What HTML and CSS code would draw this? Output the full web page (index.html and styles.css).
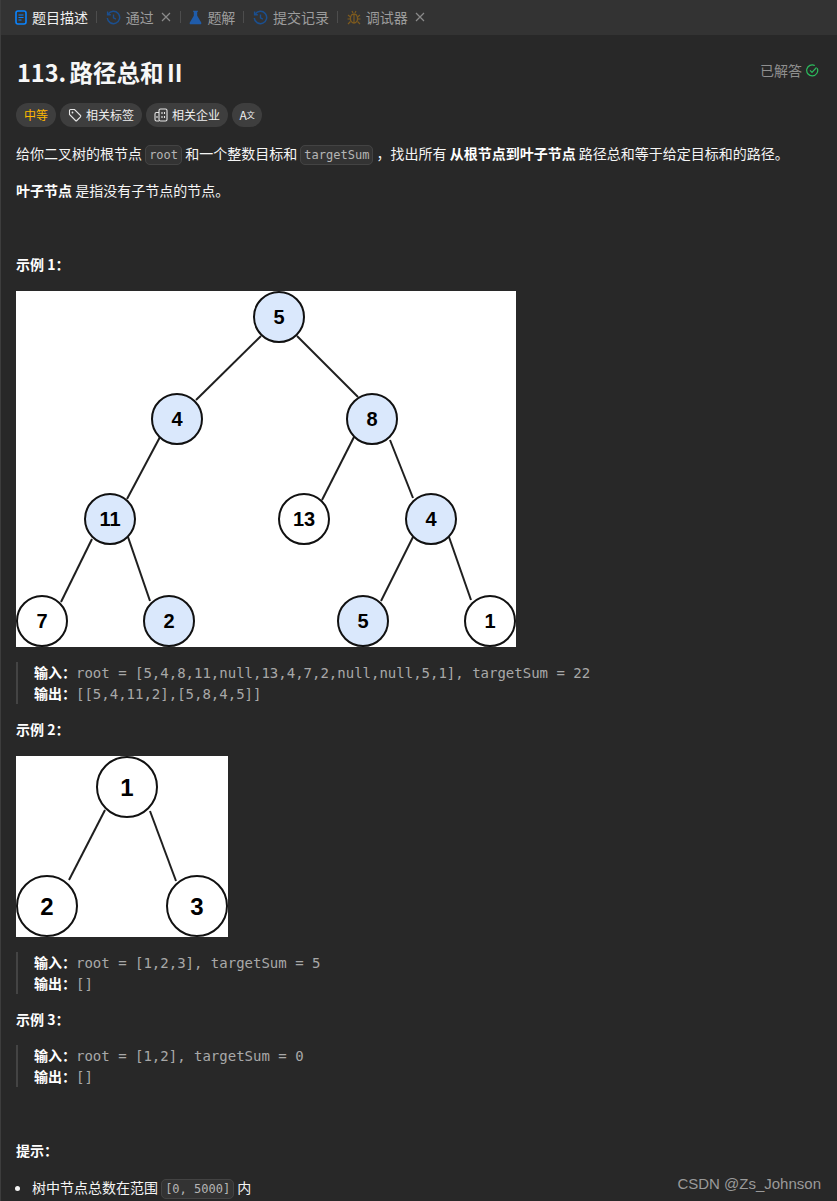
FILE: index.html
```html
<!DOCTYPE html>
<html lang="zh-CN">
<head>
  <meta charset="UTF-8">
  <title>113. 路径总和 II</title>
  <link rel="stylesheet" href="styles.css">
</head>
<body>
<div class="tabs">
  <div class="tab active">
    <svg class="tab-icon" width="12" height="15" viewBox="0 0 12 15"><rect x="1" y="1" width="10" height="13" rx="2" fill="none" stroke="#0a84ff" stroke-width="1.6"/><path d="M3.5 5h5M3.5 7.5h5M3.5 10h3" stroke="#0a84ff" stroke-width="1.2"/></svg>
    <span>题目描述</span>
  </div>
  <i class="sep"></i>
  <div class="tab">
    <svg class="tab-icon" width="15" height="15" viewBox="0 0 15 15"><path d="M2.2 4.2A6.2 6.2 0 1 1 1.3 8" fill="none" stroke="#1b4f8f" stroke-width="1.5"/><path d="M1.6 1.5v3.2h3.2" fill="none" stroke="#1b4f8f" stroke-width="1.4"/><path d="M7.5 4.5v3.3l2.4 1.4" fill="none" stroke="#1b4f8f" stroke-width="1.4"/></svg>
    <span>通过</span>
    <svg class="close" width="10" height="10" viewBox="0 0 10 10"><path d="M1 1l8 8M9 1l-8 8" stroke="#8a8a8a" stroke-width="1.2"/></svg>
  </div>
  <i class="sep"></i>
  <div class="tab">
    <svg class="tab-icon" width="13" height="15" viewBox="0 0 13 15"><path d="M4 .8h5v1H8.2v4l4 6.6c.5.9 0 1.8-1 1.8H1.800c-1 0-1.500-.9-1-1.800l4-6.600v-4H4z" fill="#1f5cab"/></svg>
    <span>题解</span>
  </div>
  <i class="sep"></i>
  <div class="tab">
    <svg class="tab-icon" width="15" height="15" viewBox="0 0 15 15"><path d="M2.200 4.200A6.200 6.200 0 1 1 1.300 8" fill="none" stroke="#1b4f8f" stroke-width="1.500"/><path d="M1.600 1.500v3.200h3.200" fill="none" stroke="#1b4f8f" stroke-width="1.400"/><path d="M7.500 4.500v3.300l2.400 1.400" fill="none" stroke="#1b4f8f" stroke-width="1.400"/></svg>
    <span>提交记录</span>
  </div>
  <i class="sep"></i>
  <div class="tab">
    <svg class="tab-icon" width="14" height="15" viewBox="0 0 14 15"><ellipse cx="7" cy="8.500" rx="3.600" ry="4.500" fill="none" stroke="#7d5a1e" stroke-width="1.400"/><path d="M4.500 4.500h5M7 5v8M1 5l2.500 2M13 5l-2.500 2M.5 9h3M13.500 9h-3M1 14l2.500-2.500M13 14l-2.500-2.500M5 1l1 2M9 1L8 3" stroke="#7d5a1e" stroke-width="1.200" fill="none"/></svg>
    <span>调试器</span>
    <svg class="close" width="10" height="10" viewBox="0 0 10 10"><path d="M1 1l8 8M9 1l-8 8" stroke="#8a8a8a" stroke-width="1.200"/></svg>
  </div>
</div>

<main class="content">
  <div class="title-row">
    <h1>113. 路径总和 II</h1>
    <div class="solved">
      <span>已解答</span>
      <svg width="13" height="13" viewBox="0 0 13 13"><path d="M11.300 4.300A5.500 5.500 0 1 1 8.800 1.500" fill="none" stroke="#2cbb5d" stroke-width="1.200"/><path d="M4 6.300l2 2 4.500-4.800" fill="none" stroke="#2cbb5d" stroke-width="1.200"/></svg>
    </div>
  </div>

  <div class="chips">
    <span class="chip level">中等</span>
    <span class="chip">
      <svg width="14" height="14" viewBox="0 0 14 14"><path d="M1.500 2.500a1 1 0 0 1 1-1h4l6 6a1 1 0 0 1 0 1.400l-3.600 3.600a1 1 0 0 1-1.400 0l-6-6z" fill="none" stroke="#e6e6e6" stroke-width="1.100"/><circle cx="4.500" cy="4.500" r=".9" fill="#e6e6e6"/></svg>
      相关标签
    </span>
    <span class="chip">
      <svg width="14" height="14" viewBox="0 0 14 14"><rect x="5" y="1" width="8" height="12" rx="1.500" fill="none" stroke="#e6e6e6" stroke-width="1.100"/><path d="M5 4.500H2.500A1.500 1.500 0 0 0 1 6v5.500A1.500 1.500 0 0 0 2.500 13H5M8 4v2M10.500 4v2M8 8v2M10.500 8v2M3 8v2" fill="none" stroke="#e6e6e6" stroke-width="1.100"/></svg>
      相关企业
    </span>
    <span class="chip lang">A<small>文</small></span>
  </div>

  <p>给你二叉树的根节点 <code>root</code> 和一个整数目标和 <code>targetSum</code> ，找出所有 <strong>从根节点到叶子节点</strong> 路径总和等于给定目标和的路径。</p>
  <p><strong>叶子节点</strong> 是指没有子节点的节点。</p>

  <p class="heading first"><strong>示例 1：</strong></p>
  <svg class="tree" width="500" height="356" viewBox="0 0 500 356">
    <g class="edges">
      <line x1="245" y1="45" x2="180" y2="109"/>
      <line x1="281" y1="45" x2="342" y2="106"/>
      <line x1="144" y1="146" x2="111" y2="208"/>
      <line x1="338" y1="146" x2="306" y2="209"/>
      <line x1="374" y1="149" x2="397" y2="207"/>
      <line x1="76" y1="248" x2="45" y2="311"/>
      <line x1="112" y1="246" x2="134" y2="310"/>
      <line x1="397" y1="246" x2="365" y2="310"/>
      <line x1="433" y1="246" x2="455" y2="309"/>
    </g>
    <g class="nodes">
      <circle class="hit" cx="263" cy="26" r="25"/><text x="263" y="33">5</text>
      <circle class="hit" cx="161" cy="128" r="25"/><text x="161" y="135">4</text>
      <circle class="hit" cx="356" cy="128" r="25"/><text x="356" y="135">8</text>
      <circle class="hit" cx="94" cy="228" r="25"/><text x="94" y="235">11</text>
      <circle cx="288" cy="228" r="25"/><text x="288" y="235">13</text>
      <circle class="hit" cx="415" cy="228" r="25"/><text x="415" y="235">4</text>
      <circle cx="26" cy="330" r="25"/><text x="26" y="337">7</text>
      <circle class="hit" cx="153" cy="330" r="25"/><text x="153" y="337">2</text>
      <circle class="hit" cx="347" cy="330" r="25"/><text x="347" y="337">5</text>
      <circle cx="474" cy="330" r="25"/><text x="474" y="337">1</text>
    </g>
  </svg>
  <pre class="sample"><strong>输入：</strong>root = [5,4,8,11,null,13,4,7,2,null,null,5,1], targetSum = 22
<strong>输出：</strong>[[5,4,11,2],[5,8,4,5]]</pre>

  <p class="heading"><strong>示例 2：</strong></p>
  <svg class="tree" width="212" height="181" viewBox="0 0 212 181">
    <g class="edges">
      <line x1="89" y1="54" x2="53" y2="124"/>
      <line x1="134" y1="55" x2="160" y2="125"/>
    </g>
    <g class="nodes big">
      <circle cx="111" cy="31" r="30"/><text x="111" y="40">1</text>
      <circle cx="31" cy="150" r="30"/><text x="31" y="159">2</text>
      <circle cx="181" cy="150" r="30"/><text x="181" y="159">3</text>
    </g>
  </svg>
  <pre class="sample"><strong>输入：</strong>root = [1,2,3], targetSum = 5
<strong>输出：</strong>[]</pre>

  <p class="heading"><strong>示例 3：</strong></p>
  <pre class="sample"><strong>输入：</strong>root = [1,2], targetSum = 0
<strong>输出：</strong>[]</pre>

  <p class="heading first"><strong>提示：</strong></p>
  <ul>
    <li>树中节点总数在范围 <code>[0, 5000]</code> 内</li>
  </ul>
</main>

<div class="watermark">CSDN @Zs_Johnson</div>
</body>
</html>
```

FILE: styles.css
```css
* {
  margin: 0;
  padding: 0;
  box-sizing: border-box;
}

html, body {
  height: 100%;
  overflow: hidden;
}

body {
  background-color: #282828;
  border-left: 1px solid #3d3d3d;
  color: #f5f5f5;
  font-family: "Noto Sans CJK SC", "Liberation Sans", sans-serif;
  font-size: 14px;
  line-height: 20px;
  position: relative;
}

svg {
  flex-shrink: 0;
}

.tabs {
  display: flex;
  align-items: center;
  height: 35px;
  padding: 0 0 1px 14px;
  background-color: #333;
  color: #9c9c9c;
}

.tab {
  display: flex;
  align-items: center;
  gap: 5px;
}

.tab.active {
  color: #f0f0f0;
}

.tab .close {
  margin: 0 1px 0 2px;
}

.sep {
  width: 1px;
  height: 12px;
  margin: 0 8.700px 0 8px;
  background-color: #4d4d4d;
}

.content {
  padding: 0 15px;
}

.title-row {
  display: flex;
  justify-content: space-between;
  align-items: center;
  padding-top: 12px;
  height: 61px;
}

h1 {
  font-size: 23.500px;
  line-height: 32px;
  font-weight: 700;
  word-spacing: -2px;
  padding-left: 1px;
  color: #f7f7f7;
}

.solved {
  display: flex;
  align-items: center;
  gap: 4px;
  color: #8f8f8f;
  padding-right: 3px;
  margin-top: -3px;
}

.chips {
  display: flex;
  gap: 4px;
  margin-top: 7px;
}

.chip {
  display: flex;
  align-items: center;
  gap: 4px;
  height: 24px;
  padding: 0 8px;
  border-radius: 12px;
  background-color: #3e3e3e;
  color: #eee;
  font-size: 12px;
}

.chip.level {
  color: #ffb800;
}

.chip.lang {
  width: 30px;
  padding: 0;
  gap: 0;
  justify-content: center;
}

.chip.lang small {
  font-size: 8px;
}

p {
  line-height: 22px;
  margin-top: 15px;
}

.heading {
  margin-top: 14px;
}

.heading.first {
  margin-top: 52px;
}

strong {
  font-weight: 700;
  color: #fff;
}

code {
  font-family: "DejaVu Sans Mono", "Noto Sans CJK SC", monospace;
  font-size: 12px;
  line-height: 1;
  padding: 2px 3px;
  border: 1px solid #434343;
  border-radius: 5px;
  background-color: #333;
  color: #b5b5b5;
}

.tree {
  display: block;
  margin-top: 16px;
  background-color: #fff;
}

.edges line {
  stroke: #1f1f1f;
  stroke-width: 2;
}

.nodes circle {
  fill: #fff;
  stroke: #111;
  stroke-width: 2;
}

.nodes circle.hit {
  fill: #dae8fc;
}

.nodes text {
  font-family: "Liberation Sans", sans-serif;
  font-size: 20px;
  font-weight: 700;
  text-anchor: middle;
  fill: #000;
}

.nodes.big text {
  font-size: 24px;
}

.sample {
  margin-top: 15px;
  padding-left: 16px;
  border-left: 2px solid #444;
  font-family: "DejaVu Sans Mono", "Noto Sans CJK SC", monospace;
  font-size: 14px;
  line-height: 20px;
  color: #a8a8a8;
}

.sample strong {
  font-family: "Noto Sans CJK SC", sans-serif;
}

ul {
  margin-top: 16px;
  padding-left: 16px;
}

.watermark {
  position: absolute;
  right: 16px;
  bottom: 7px;
  font-family: "Liberation Sans", sans-serif;
  font-size: 15px;
  color: #9a9a9a;
}
```
